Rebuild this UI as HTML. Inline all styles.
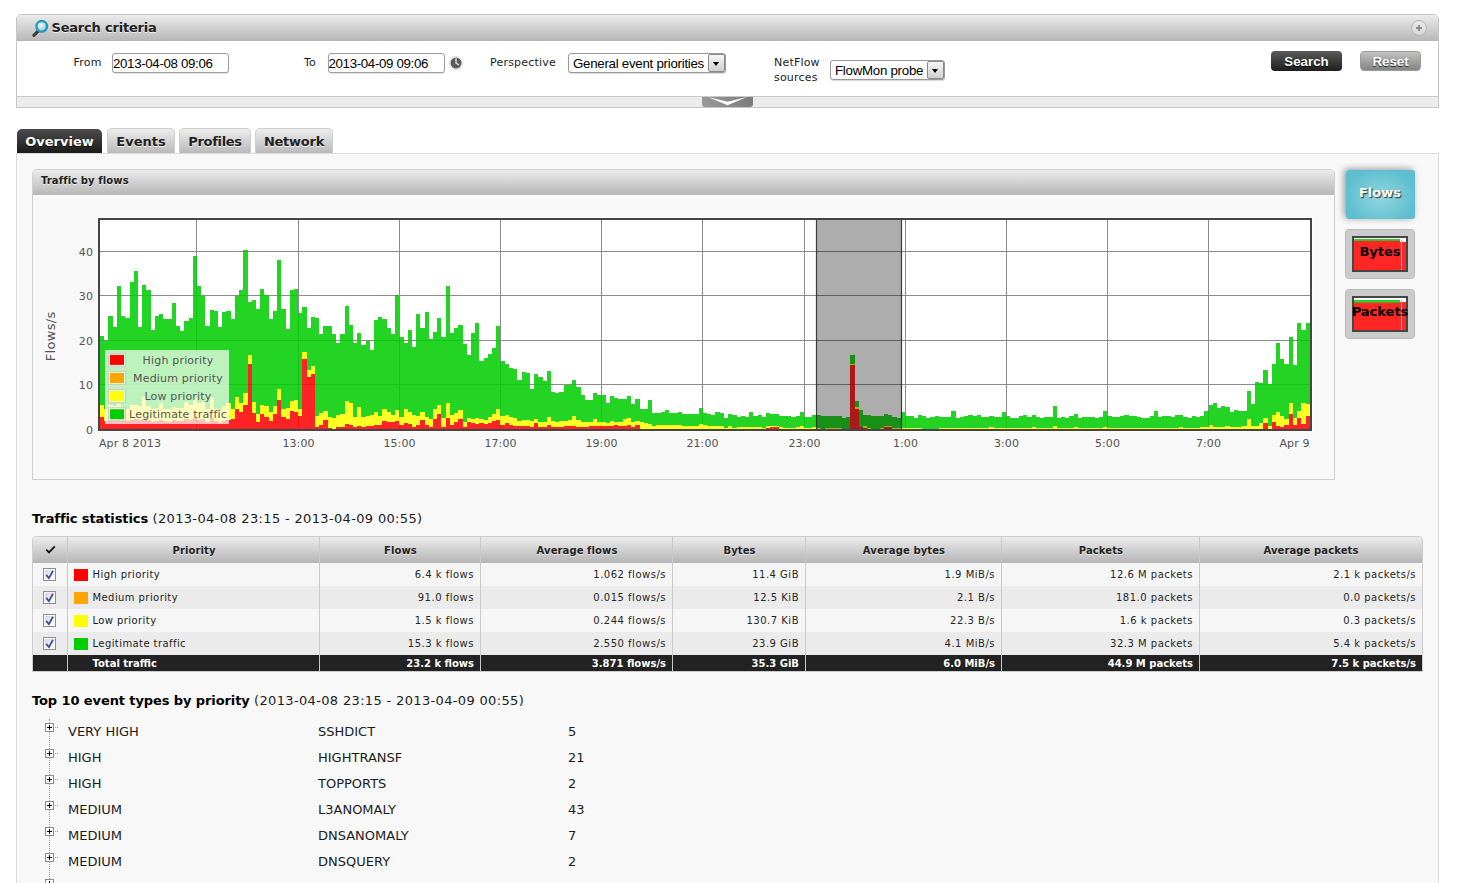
<!DOCTYPE html>
<html><head><meta charset="utf-8"><title>Overview</title>
<style>
*{box-sizing:border-box}
html,body{margin:0;padding:0}
body{width:1459px;height:883px;overflow:hidden;background:#fff;position:relative;font-family:"DejaVu Sans","Liberation Sans",sans-serif;font-size:11px;color:#1c1c1c}
.abs{position:absolute}
.ar{font-family:"Liberation Sans","DejaVu Sans",sans-serif}
/* search panel */
#sp{left:16px;top:14px;width:1423px;height:94px;border:1px solid #c6c6c6;border-radius:5px 5px 0 0;background:#fff}
#sph{left:0;top:0;width:1421px;height:26px;border-radius:4px 4px 0 0;background:linear-gradient(#ebebeb,#b7b7b7)}
#spt{left:34.5px;top:5px;letter-spacing:-.2px;font-weight:bold;font-size:13px;line-height:16px;color:#222;text-shadow:0 1px 0 rgba(255,255,255,.7)}
#spf{left:0;top:81px;width:1421px;height:11px;background:#ececec;border-top:1px solid #c8c8c8}
#tog{left:685.4px;top:82px;width:51px;height:10px;background:linear-gradient(90deg,#9a9a9a,#7c7c7c);border-radius:0 0 3px 3px}
.lbl{letter-spacing:.2px;font-size:11px;line-height:15px;color:#1c1c1c;white-space:nowrap}
.inp{height:20px;border:1px solid #9e9e9e;border-radius:3px;background:#fff;font-size:13.3px;letter-spacing:-.34px;line-height:18px;padding-left:0;padding-top:.5px;color:#000;white-space:nowrap;box-shadow:0 1px 1px rgba(0,0,0,.12)}
.sel{height:20px;border:1px solid #9a9a9a;border-radius:3px;background:#fff;font-size:13.3px;letter-spacing:-.27px;line-height:18px;padding-left:4px;padding-top:1px;color:#000;white-space:nowrap;box-shadow:0 1px 1px rgba(0,0,0,.15)}
.sel i{position:absolute;right:0;top:0;width:17px;height:18px;border:1px solid #8a8a8a;border-radius:2px;background:linear-gradient(#f6f6f6,#cfcfcf)}
.sel i:after{content:"";position:absolute;left:3.7px;top:7px;border:3.8px solid transparent;border-top:4px solid #000;border-bottom:0}
.btn{height:20px;border-radius:4px;font-weight:bold;font-size:13.3px;line-height:21px;text-align:center;color:#fff}
/* tabs */
.tab{top:128px;height:25px;border:1px solid #cfcfcf;border-bottom:0;border-radius:5px 5px 0 0;background:linear-gradient(#ededed,#b9b9b9);font-weight:bold;font-size:13px;line-height:26px;text-align:center;color:#222;text-shadow:0 1px 0 rgba(255,255,255,.8)}
#t1{top:129px;height:24px;border:0;background:linear-gradient(#4c4c4c,#1b1b1b);color:#fff;text-shadow:0 1px 1px #000;line-height:26px}
#panel{left:16px;top:153px;width:1423px;height:760px;border:1px solid #dcdcdc;background:#f8f8f8}
#tp{left:32px;top:169px;width:1303px;height:311px;border:1px solid #cfcfcf;border-radius:5px 5px 0 0;background:#f8f8f8}
#tph{left:0;top:0;width:1301px;height:25px;border-radius:4px 4px 0 0;background:linear-gradient(#ebebeb,#b7b7b7);font-weight:bold;font-size:10px;letter-spacing:.11px;line-height:22px;padding-left:8px;color:#222;text-shadow:0 1px 0 rgba(255,255,255,.6)}
svg.chart{position:absolute;left:32px;top:195px}
svg .tk{font-family:"DejaVu Sans","Liberation Sans",sans-serif;font-size:11px;fill:#545454;letter-spacing:.1px}
svg .yl{font-family:"DejaVu Sans","Liberation Sans",sans-serif;font-size:13px;fill:#545454;letter-spacing:.33px}
svg .lt{font-family:"DejaVu Sans","Liberation Sans",sans-serif;font-size:11px;fill:#545454;letter-spacing:.18px}
.sb{left:1345px;width:70px;height:50px;border-radius:4px;font-weight:bold;font-size:13px;text-align:center}
#b1{top:169.5px;left:1345.5px;width:69px;height:49px;border-radius:3px;background:radial-gradient(ellipse at 50% 55%,#93d5df,#5cbecf 75%);color:#fff;line-height:45px;text-shadow:1px 1px 1px rgba(0,0,0,.75);box-shadow:-2px -1px 7px rgba(0,0,0,.4)}
.sb2{background:#cbcbcb;border:1px solid #b9b9b9;color:#000}
.mini{position:absolute;left:6px;top:6px;width:56px;height:36px;border:2px solid #464646;background:#ff2626;overflow:hidden}
.mini b{position:absolute;left:0;top:0;width:52px;height:2px;background:#fff}
.mini u{position:absolute;left:0;top:1px;width:46px;height:2px;background:linear-gradient(#2bd22b 60%,#8c7a28)}
.mini s{position:absolute;left:47px;top:2px;width:1px;height:30px;background:#ffa060}
.mini em{position:absolute;left:46px;top:0;width:6px;height:4px;background:#fff}
.sbt{position:absolute;left:-10px;width:88px;top:13px;line-height:18px;font-style:normal}
h2{margin:0;font-size:13px;line-height:16px;font-weight:bold;color:#000;white-space:nowrap;letter-spacing:-.1px}
h2 span{font-weight:normal;color:#1c1c1c;letter-spacing:.34px}
/* table */
#tb{left:32px;top:536px;width:1391px;height:136px;border:1px solid #cdcdcd;border-radius:4px 4px 0 0;overflow:hidden}
#tbh{left:0;top:0;width:1389px;height:26px;background:linear-gradient(#ebebeb,#b5b5b5)}
.row{left:0;width:1389px;height:23px}
.th{top:0;height:26px;letter-spacing:.1px;line-height:28px;text-align:center;font-weight:bold;font-size:10px;color:#222;text-shadow:0 1px 0 rgba(255,255,255,.6)}
.td{top:0;height:23px;line-height:24px;text-align:right;padding-right:7px;white-space:nowrap;font-size:10px;letter-spacing:.5px;color:#262626}
.vl{top:0;width:1px;height:135px;background:#c9c9c9}
.cb{left:10px;top:5px;width:13px;height:13px;border:1px solid #8c8d8d;background:linear-gradient(135deg,#c6ccd8,#fff 75%);box-shadow:inset 0 0 0 1px #fff}
.cb svg{position:absolute;left:0;top:0}
.sw{left:41px;top:6px;width:14px;height:12px}
.nm{left:59.5px;top:0;line-height:24px;font-size:10px;letter-spacing:.42px;white-space:nowrap}
#tot{top:118px;height:17px;background:#222}
#tot .td,#tot .nm{color:#fff;font-weight:bold;height:16px;line-height:18px;letter-spacing:0}
/* tree */
.tr{font-family:"DejaVu Sans","Liberation Sans",sans-serif;font-size:13px;line-height:16px;color:#1c1c1c;white-space:nowrap}
.pm{width:9px;height:9px;border:1px solid #8c8c8c;background:#fff}
.pm:before{content:"";position:absolute;left:1px;top:3px;width:5px;height:1px;background:#000}
.pm:after{content:"";position:absolute;left:3px;top:1px;width:1px;height:5px;background:#000}
</style></head><body>

<div id="sp" class="abs">
  <div id="sph" class="abs"></div>
  <svg class="abs" style="left:14px;top:3px" width="20" height="20" viewBox="0 0 20 20"><defs><radialGradient id="lens" cx="40%" cy="35%" r="70%"><stop offset="0" stop-color="#eef6f8"/><stop offset="1" stop-color="#9fc4cf"/></radialGradient></defs><line x1="2.9" y1="17.3" x2="7" y2="13.2" stroke="#3a3a3a" stroke-width="3.1" stroke-linecap="round"/><circle cx="10.7" cy="8.3" r="5.3" fill="url(#lens)" stroke="#1b9cbf" stroke-width="2.4"/></svg>
  <div id="spt" class="abs">Search criteria</div>
  <div class="abs" style="left:1394px;top:5px;width:16px;height:16px;border-radius:8px;border:1px solid #b4b4b4;background:rgba(255,255,255,.35)"></div>
  <div class="abs" style="left:1399px;top:12px;width:6px;height:2px;background:#8c8c8c"></div><div class="abs" style="left:1401px;top:10px;width:2px;height:6px;background:#8c8c8c"></div>

  <div class="abs lbl" style="left:56.4px;top:40px;letter-spacing:.3px">From</div>
  <div class="abs inp ar" style="left:95px;top:38px;width:117px">2013-04-08 09:06</div>
  <div class="abs lbl" style="left:287px;top:40px">To</div>
  <div class="abs inp ar" style="left:310.5px;top:38px;width:117px">2013-04-09 09:06</div>
  <svg class="abs" style="left:432px;top:41px" width="14" height="14" viewBox="0 0 14 14"><circle cx="7" cy="7" r="6.5" fill="none" stroke="#dcdcdc" stroke-width="1"/><circle cx="7" cy="7" r="5.5" fill="#5b5b5b"/><path d="M7 2.2V7.2L10 8.8" stroke="#e0e0e0" stroke-width="1.4" fill="none"/></svg>
  <div class="abs lbl" style="left:473px;top:40px">Perspective</div>
  <div class="abs sel ar" style="left:551px;top:38px;width:158px">General event priorities<i></i></div>
  <div class="abs lbl" style="left:757px;top:40px">NetFlow<br>sources</div>
  <div class="abs sel ar" style="left:813px;top:45px;width:115px">FlowMon probe<i></i></div>
  <div class="abs btn ar" style="left:1254px;top:36px;width:71px;background:linear-gradient(#5a5a5a,#1e1e1e);text-shadow:0 1px 1px #000">Search</div>
  <div class="abs btn ar" style="left:1343px;top:36px;width:61px;background:linear-gradient(#c2c2c2,#848484);border:1px solid #9c9c9c;line-height:19px;text-shadow:0 1px 1px rgba(0,0,0,.8)">Reset</div>

  <div id="spf" class="abs"></div>
  <div id="tog" class="abs"><svg width="51" height="10" viewBox="0 0 51 10" style="position:absolute;left:0;top:0"><path d="M6 0L25.5 8.2L45 0L25.5 4.8Z" fill="#fff"/></svg></div>
</div>

<div id="panel" class="abs"></div>
<div id="t1" class="abs tab" style="left:17px;width:85px">Overview</div>
<div class="abs tab" style="left:107px;width:68px">Events</div>
<div class="abs tab" style="left:179px;width:72px;letter-spacing:-.3px">Profiles</div>
<div class="abs tab" style="left:255px;width:78px;letter-spacing:-.25px">Network</div>

<div id="tp" class="abs"><div id="tph" class="abs">Traffic by flows</div></div>
<svg class="chart" width="1302" height="284" viewBox="32 195 1302 284">
<rect x="97" y="217" width="1216" height="215" fill="#fff"/>
<line x1="196.5" y1="220" x2="196.5" y2="429" stroke="#8c8c8c" stroke-width="1"/>
<line x1="298.5" y1="220" x2="298.5" y2="429" stroke="#8c8c8c" stroke-width="1"/>
<line x1="399.5" y1="220" x2="399.5" y2="429" stroke="#8c8c8c" stroke-width="1"/>
<line x1="500.5" y1="220" x2="500.5" y2="429" stroke="#8c8c8c" stroke-width="1"/>
<line x1="601.5" y1="220" x2="601.5" y2="429" stroke="#8c8c8c" stroke-width="1"/>
<line x1="702.5" y1="220" x2="702.5" y2="429" stroke="#8c8c8c" stroke-width="1"/>
<line x1="804.5" y1="220" x2="804.5" y2="429" stroke="#8c8c8c" stroke-width="1"/>
<line x1="905.5" y1="220" x2="905.5" y2="429" stroke="#8c8c8c" stroke-width="1"/>
<line x1="1006.5" y1="220" x2="1006.5" y2="429" stroke="#8c8c8c" stroke-width="1"/>
<line x1="1107.5" y1="220" x2="1107.5" y2="429" stroke="#8c8c8c" stroke-width="1"/>
<line x1="1208.5" y1="220" x2="1208.5" y2="429" stroke="#8c8c8c" stroke-width="1"/>
<line x1="100" y1="251.5" x2="1310" y2="251.5" stroke="#8c8c8c" stroke-width="1"/>
<line x1="100" y1="295.5" x2="1310" y2="295.5" stroke="#8c8c8c" stroke-width="1"/>
<line x1="100" y1="340.5" x2="1310" y2="340.5" stroke="#8c8c8c" stroke-width="1"/>
<line x1="100" y1="384.5" x2="1310" y2="384.5" stroke="#8c8c8c" stroke-width="1"/>
<g shape-rendering="crispEdges" fill-opacity="0.86">
<path d="M100.0 335.8 L104.2 335.8 L104.2 340.6 L108.4 340.6 L108.4 315.8 L112.6 315.8 L112.6 327.3 L116.9 327.3 L116.9 285.5 L121.1 285.5 L121.1 315.8 L125.3 315.8 L125.3 317.8 L129.5 317.8 L129.5 281.5 L133.7 281.5 L133.7 270.9 L137.9 270.9 L137.9 327.1 L142.2 327.1 L142.2 285.1 L146.4 285.1 L146.4 289.7 L150.6 289.7 L150.6 329.5 L154.8 329.5 L154.8 316.4 L159.0 316.4 L159.0 314.3 L163.2 314.3 L163.2 319.1 L167.4 319.1 L167.4 318.8 L171.7 318.8 L171.7 302.6 L175.9 302.6 L175.9 326.1 L180.1 326.1 L180.1 331.2 L184.3 331.2 L184.3 320.6 L188.5 320.6 L188.5 317.6 L192.7 317.6 L192.7 256.4 L196.9 256.4 L196.9 285.8 L201.2 285.8 L201.2 295.8 L205.4 295.8 L205.4 325.5 L209.6 325.5 L209.6 309.6 L213.8 309.6 L213.8 310.6 L218.0 310.6 L218.0 326.5 L222.2 326.5 L222.2 311.8 L226.4 311.8 L226.4 310.6 L230.7 310.6 L230.7 318.6 L234.9 318.6 L234.9 295.5 L239.1 295.5 L239.1 289.9 L243.3 289.9 L243.3 250.3 L247.5 250.3 L247.5 302.4 L251.7 302.4 L251.7 300.4 L256.0 300.4 L256.0 308.6 L260.2 308.6 L260.2 288.9 L264.4 288.9 L264.4 295.4 L268.6 295.4 L268.6 319.1 L272.8 319.1 L272.8 310.9 L277.0 310.9 L277.0 260.4 L281.2 260.4 L281.2 308.7 L285.5 308.7 L285.5 328.5 L289.7 328.5 L289.7 290.3 L293.9 290.3 L293.9 289.1 L298.1 289.1 L298.1 312.5 L302.3 312.5 L302.3 307.3 L306.5 307.3 L306.5 327.5 L310.8 327.5 L310.8 316.6 L315.0 316.6 L315.0 318.2 L319.2 318.2 L319.2 333.6 L323.4 333.6 L323.4 326.1 L327.6 326.1 L327.6 325.8 L331.8 325.8 L331.8 334.0 L336.0 334.0 L336.0 342.5 L340.3 342.5 L340.3 333.6 L344.5 333.6 L344.5 306.3 L348.7 306.3 L348.7 324.5 L352.9 324.5 L352.9 342.5 L357.1 342.5 L357.1 333.1 L361.3 333.1 L361.3 344.5 L365.5 344.5 L365.5 340.9 L369.8 340.9 L369.8 349.6 L374.0 349.6 L374.0 320.0 L378.2 320.0 L378.2 316.7 L382.4 316.7 L382.4 319.1 L386.6 319.1 L386.6 327.7 L390.8 327.7 L390.8 334.0 L395.1 334.0 L395.1 294.9 L399.3 294.9 L399.3 336.8 L403.5 336.8 L403.5 343.4 L407.7 343.4 L407.7 329.7 L411.9 329.7 L411.9 346.6 L416.1 346.6 L416.1 314.4 L420.3 314.4 L420.3 327.9 L424.6 327.9 L424.6 312.1 L428.8 312.1 L428.8 339.2 L433.0 339.2 L433.0 332.4 L437.2 332.4 L437.2 318.2 L441.4 318.2 L441.4 336.6 L445.6 336.6 L445.6 285.5 L449.8 285.5 L449.8 332.8 L454.1 332.8 L454.1 327.9 L458.3 327.9 L458.3 324.6 L462.5 324.6 L462.5 344.4 L466.7 344.4 L466.7 354.7 L470.9 354.7 L470.9 333.4 L475.1 333.4 L475.1 322.7 L479.3 322.7 L479.3 360.5 L483.6 360.5 L483.6 358.3 L487.8 358.3 L487.8 353.8 L492.0 353.8 L492.0 347.5 L496.2 347.5 L496.2 326.3 L500.4 326.3 L500.4 361.1 L504.6 361.1 L504.6 364.4 L508.9 364.4 L508.9 367.7 L513.1 367.7 L513.1 369.3 L517.3 369.3 L517.3 380.0 L521.5 380.0 L521.5 371.6 L525.7 371.6 L525.7 373.4 L529.9 373.4 L529.9 388.8 L534.1 388.8 L534.1 374.3 L538.4 374.3 L538.4 377.4 L542.6 377.4 L542.6 381.3 L546.8 381.3 L546.8 370.7 L551.0 370.7 L551.0 392.2 L555.2 392.2 L555.2 393.1 L559.4 393.1 L559.4 391.5 L563.6 391.5 L563.6 384.9 L567.9 384.9 L567.9 384.6 L572.1 384.6 L572.1 379.5 L576.3 379.5 L576.3 387.0 L580.5 387.0 L580.5 394.9 L584.7 394.9 L584.7 400.3 L588.9 400.3 L588.9 399.9 L593.2 399.9 L593.2 393.4 L597.4 393.4 L597.4 395.1 L601.6 395.1 L601.6 394.5 L605.8 394.5 L605.8 402.5 L610.0 402.5 L610.0 396.3 L614.2 396.3 L614.2 397.7 L618.4 397.7 L618.4 398.7 L622.7 398.7 L622.7 398.5 L626.9 398.5 L626.9 395.7 L631.1 395.7 L631.1 404.3 L635.3 404.3 L635.3 399.1 L639.5 399.1 L639.5 408.5 L643.7 408.5 L643.7 409.4 L647.9 409.4 L647.9 399.7 L652.2 399.7 L652.2 413.0 L656.4 413.0 L656.4 412.8 L660.6 412.8 L660.6 412.1 L664.8 412.1 L664.8 410.0 L669.0 410.0 L669.0 412.8 L673.2 412.8 L673.2 412.5 L677.5 412.5 L677.5 412.3 L681.7 412.3 L681.7 414.2 L685.9 414.2 L685.9 414.0 L690.1 414.0 L690.1 414.0 L694.3 414.0 L694.3 414.4 L698.5 414.4 L698.5 408.2 L702.7 408.2 L702.7 413.0 L707.0 413.0 L707.0 414.4 L711.2 414.4 L711.2 415.2 L715.4 415.2 L715.4 412.0 L719.6 412.0 L719.6 413.2 L723.8 413.2 L723.8 417.5 L728.0 417.5 L728.0 413.8 L732.2 413.8 L732.2 415.4 L736.5 415.4 L736.5 417.2 L740.7 417.2 L740.7 415.7 L744.9 415.7 L744.9 417.0 L749.1 417.0 L749.1 411.8 L753.3 411.8 L753.3 416.4 L757.5 416.4 L757.5 415.4 L761.8 415.4 L761.8 417.2 L766.0 417.2 L766.0 413.4 L770.2 413.4 L770.2 414.0 L774.4 414.0 L774.4 413.5 L778.6 413.5 L778.6 415.7 L782.8 415.7 L782.8 416.3 L787.0 416.3 L787.0 416.3 L791.3 416.3 L791.3 417.2 L795.5 417.2 L795.5 416.4 L799.7 416.4 L799.7 411.5 L803.9 411.5 L803.9 416.6 L808.1 416.6 L808.1 416.9 L812.3 416.9 L812.3 415.4 L816.5 415.4 L816.5 415.4 L820.8 415.4 L820.8 416.4 L825.0 416.4 L825.0 416.0 L829.2 416.0 L829.2 415.8 L833.4 415.8 L833.4 416.4 L837.6 416.4 L837.6 416.3 L841.8 416.3 L841.8 417.5 L846.1 417.5 L846.1 417.0 L850.3 417.0 L850.3 355.3 L854.5 355.3 L854.5 401.2 L858.7 401.2 L858.7 409.6 L862.9 409.6 L862.9 415.2 L867.1 415.2 L867.1 414.6 L871.3 414.6 L871.3 416.4 L875.6 416.4 L875.6 416.0 L879.8 416.0 L879.8 416.0 L884.0 416.0 L884.0 414.2 L888.2 414.2 L888.2 414.8 L892.4 414.8 L892.4 416.9 L896.6 416.9 L896.6 417.8 L900.9 417.8 L900.9 412.4 L905.1 412.4 L905.1 416.4 L909.3 416.4 L909.3 416.4 L913.5 416.4 L913.5 417.5 L917.7 417.5 L917.7 415.2 L921.9 415.2 L921.9 416.0 L926.1 416.0 L926.1 417.5 L930.4 417.5 L930.4 416.6 L934.6 416.6 L934.6 416.4 L938.8 416.4 L938.8 416.6 L943.0 416.6 L943.0 416.6 L947.2 416.6 L947.2 416.9 L951.4 416.9 L951.4 411.4 L955.6 411.4 L955.6 417.6 L959.9 417.6 L959.9 416.6 L964.1 416.6 L964.1 416.3 L968.3 416.3 L968.3 415.4 L972.5 415.4 L972.5 416.4 L976.7 416.4 L976.7 415.2 L980.9 415.2 L980.9 416.9 L985.1 416.9 L985.1 417.2 L989.4 417.2 L989.4 416.4 L993.6 416.4 L993.6 417.2 L997.8 417.2 L997.8 417.2 L1002.0 417.2 L1002.0 412.4 L1006.2 412.4 L1006.2 416.0 L1010.4 416.0 L1010.4 418.4 L1014.7 418.4 L1014.7 417.5 L1018.9 417.5 L1018.9 415.7 L1023.1 415.7 L1023.1 415.4 L1027.3 415.4 L1027.3 417.2 L1031.5 417.2 L1031.5 415.4 L1035.7 415.4 L1035.7 416.9 L1039.9 416.9 L1039.9 417.8 L1044.2 417.8 L1044.2 416.6 L1048.4 416.6 L1048.4 416.9 L1052.6 416.9 L1052.6 406.4 L1056.8 406.4 L1056.8 417.8 L1061.0 417.8 L1061.0 417.0 L1065.2 417.0 L1065.2 417.5 L1069.4 417.5 L1069.4 416.0 L1073.7 416.0 L1073.7 413.6 L1077.9 413.6 L1077.9 417.5 L1082.1 417.5 L1082.1 417.2 L1086.3 417.2 L1086.3 416.6 L1090.5 416.6 L1090.5 417.2 L1094.7 417.2 L1094.7 418.1 L1099.0 418.1 L1099.0 417.2 L1103.2 417.2 L1103.2 410.8 L1107.4 410.8 L1107.4 416.3 L1111.6 416.3 L1111.6 417.2 L1115.8 417.2 L1115.8 417.2 L1120.0 417.2 L1120.0 416.3 L1124.2 416.3 L1124.2 414.8 L1128.5 414.8 L1128.5 416.0 L1132.7 416.0 L1132.7 416.3 L1136.9 416.3 L1136.9 417.2 L1141.1 417.2 L1141.1 417.8 L1145.3 417.8 L1145.3 418.4 L1149.5 418.4 L1149.5 416.3 L1153.8 416.3 L1153.8 411.4 L1158.0 411.4 L1158.0 416.6 L1162.2 416.6 L1162.2 416.0 L1166.4 416.0 L1166.4 416.3 L1170.6 416.3 L1170.6 417.2 L1174.8 417.2 L1174.8 414.8 L1179.0 414.8 L1179.0 415.4 L1183.3 415.4 L1183.3 416.6 L1187.5 416.6 L1187.5 417.8 L1191.7 417.8 L1191.7 416.0 L1195.9 416.0 L1195.9 417.2 L1200.1 417.2 L1200.1 416.0 L1204.3 416.0 L1204.3 410.6 L1208.5 410.6 L1208.5 405.4 L1212.8 405.4 L1212.8 403.1 L1217.0 403.1 L1217.0 408.4 L1221.2 408.4 L1221.2 406.4 L1225.4 406.4 L1225.4 407.2 L1229.6 407.2 L1229.6 412.4 L1233.8 412.4 L1233.8 410.2 L1238.0 410.2 L1238.0 411.4 L1242.3 411.4 L1242.3 410.6 L1246.5 410.6 L1246.5 390.9 L1250.7 390.9 L1250.7 404.3 L1254.9 404.3 L1254.9 382.4 L1259.1 382.4 L1259.1 382.8 L1263.3 382.8 L1263.3 370.4 L1267.6 370.4 L1267.6 383.8 L1271.8 383.8 L1271.8 364.3 L1276.0 364.3 L1276.0 342.6 L1280.2 342.6 L1280.2 359.2 L1284.4 359.2 L1284.4 364.3 L1288.6 364.3 L1288.6 337.3 L1292.8 337.3 L1292.8 365.0 L1297.1 365.0 L1297.1 322.6 L1301.3 322.6 L1301.3 330.3 L1305.5 330.3 L1305.5 322.6 L1310.0 322.6 L1310.0 404.3 L1305.5 404.3 L1305.5 403.3 L1301.3 403.3 L1301.3 410.9 L1297.1 410.9 L1297.1 417.8 L1292.8 417.8 L1292.8 403.3 L1288.6 403.3 L1288.6 419.0 L1284.4 419.0 L1284.4 416.3 L1280.2 416.3 L1280.2 411.8 L1276.0 411.8 L1276.0 414.6 L1271.8 414.6 L1271.8 426.0 L1267.6 426.0 L1267.6 417.5 L1263.3 417.5 L1263.3 423.3 L1259.1 423.3 L1259.1 426.0 L1254.9 426.0 L1254.9 426.0 L1250.7 426.0 L1250.7 419.4 L1246.5 419.4 L1246.5 426.3 L1242.3 426.3 L1242.3 426.5 L1238.0 426.5 L1238.0 426.5 L1233.8 426.5 L1233.8 427.2 L1229.6 427.2 L1229.6 426.3 L1225.4 426.3 L1225.4 426.9 L1221.2 426.9 L1221.2 427.2 L1217.0 427.2 L1217.0 426.9 L1212.8 426.9 L1212.8 425.3 L1208.5 425.3 L1208.5 426.6 L1204.3 426.6 L1204.3 427.2 L1200.1 427.2 L1200.1 427.9 L1195.9 427.9 L1195.9 427.5 L1191.7 427.5 L1191.7 428.1 L1187.5 428.1 L1187.5 428.1 L1183.3 428.1 L1183.3 426.9 L1179.0 426.9 L1179.0 427.5 L1174.8 427.5 L1174.8 428.1 L1170.6 428.1 L1170.6 428.1 L1166.4 428.1 L1166.4 428.1 L1162.2 428.1 L1162.2 427.9 L1158.0 427.9 L1158.0 427.5 L1153.8 427.5 L1153.8 427.9 L1149.5 427.9 L1149.5 428.1 L1145.3 428.1 L1145.3 428.1 L1141.1 428.1 L1141.1 428.0 L1136.9 428.0 L1136.9 428.0 L1132.7 428.0 L1132.7 428.0 L1128.5 428.0 L1128.5 428.0 L1124.2 428.0 L1124.2 428.0 L1120.0 428.0 L1120.0 428.0 L1115.8 428.0 L1115.8 428.0 L1111.6 428.0 L1111.6 428.0 L1107.4 428.0 L1107.4 427.0 L1103.2 427.0 L1103.2 428.0 L1099.0 428.0 L1099.0 428.0 L1094.7 428.0 L1094.7 428.0 L1090.5 428.0 L1090.5 428.0 L1086.3 428.0 L1086.3 428.0 L1082.1 428.0 L1082.1 428.0 L1077.9 428.0 L1077.9 427.0 L1073.7 427.0 L1073.7 428.0 L1069.4 428.0 L1069.4 428.0 L1065.2 428.0 L1065.2 428.0 L1061.0 428.0 L1061.0 428.0 L1056.8 428.0 L1056.8 426.3 L1052.6 426.3 L1052.6 428.0 L1048.4 428.0 L1048.4 428.0 L1044.2 428.0 L1044.2 428.0 L1039.9 428.0 L1039.9 428.0 L1035.7 428.0 L1035.7 427.2 L1031.5 427.2 L1031.5 428.0 L1027.3 428.0 L1027.3 428.0 L1023.1 428.0 L1023.1 428.0 L1018.9 428.0 L1018.9 428.0 L1014.7 428.0 L1014.7 428.0 L1010.4 428.0 L1010.4 428.0 L1006.2 428.0 L1006.2 428.0 L1002.0 428.0 L1002.0 428.0 L997.8 428.0 L997.8 428.0 L993.6 428.0 L993.6 427.2 L989.4 427.2 L989.4 428.0 L985.1 428.0 L985.1 428.0 L980.9 428.0 L980.9 428.1 L976.7 428.1 L976.7 428.1 L972.5 428.1 L972.5 428.2 L968.3 428.2 L968.3 428.2 L964.1 428.2 L964.1 428.2 L959.9 428.2 L959.9 428.2 L955.6 428.2 L955.6 428.1 L951.4 428.1 L951.4 428.3 L947.2 428.3 L947.2 428.3 L943.0 428.3 L943.0 428.3 L938.8 428.3 L938.8 428.5 L934.6 428.5 L934.6 428.5 L930.4 428.5 L930.4 428.5 L926.1 428.5 L926.1 428.5 L921.9 428.5 L921.9 428.2 L917.7 428.2 L917.7 428.2 L913.5 428.2 L913.5 428.2 L909.3 428.2 L909.3 428.1 L905.1 428.1 L905.1 427.9 L900.9 427.9 L900.9 427.9 L896.6 427.9 L896.6 428.1 L892.4 428.1 L892.4 426.3 L888.2 426.3 L888.2 425.7 L884.0 425.7 L884.0 428.1 L879.8 428.1 L879.8 428.5 L875.6 428.5 L875.6 428.5 L871.3 428.5 L871.3 427.9 L867.1 427.9 L867.1 426.3 L862.9 426.3 L862.9 426.6 L858.7 426.6 L858.7 407.2 L854.5 407.2 L854.5 364.4 L850.3 364.4 L850.3 428.5 L846.1 428.5 L846.1 428.5 L841.8 428.5 L841.8 428.3 L837.6 428.3 L837.6 428.2 L833.4 428.2 L833.4 428.1 L829.2 428.1 L829.2 428.1 L825.0 428.1 L825.0 428.5 L820.8 428.5 L820.8 428.1 L816.5 428.1 L816.5 426.6 L812.3 426.6 L812.3 427.5 L808.1 427.5 L808.1 427.7 L803.9 427.7 L803.9 426.3 L799.7 426.3 L799.7 427.2 L795.5 427.2 L795.5 427.5 L791.3 427.5 L791.3 427.5 L787.0 427.5 L787.0 427.7 L782.8 427.7 L782.8 427.2 L778.6 427.2 L778.6 425.7 L774.4 425.7 L774.4 425.7 L770.2 425.7 L770.2 426.3 L766.0 426.3 L766.0 428.1 L761.8 428.1 L761.8 426.9 L757.5 426.9 L757.5 426.6 L753.3 426.6 L753.3 426.5 L749.1 426.5 L749.1 427.2 L744.9 427.2 L744.9 426.9 L740.7 426.9 L740.7 427.2 L736.5 427.2 L736.5 427.5 L732.2 427.5 L732.2 425.7 L728.0 425.7 L728.0 428.1 L723.8 428.1 L723.8 426.3 L719.6 426.3 L719.6 426.2 L715.4 426.2 L715.4 425.9 L711.2 425.9 L711.2 425.7 L707.0 425.7 L707.0 425.4 L702.7 425.4 L702.7 424.1 L698.5 424.1 L698.5 425.8 L694.3 425.8 L694.3 426.0 L690.1 426.0 L690.1 425.7 L685.9 425.7 L685.9 425.8 L681.7 425.8 L681.7 424.8 L677.5 424.8 L677.5 425.4 L673.2 425.4 L673.2 425.3 L669.0 425.3 L669.0 425.1 L664.8 425.1 L664.8 425.3 L660.6 425.3 L660.6 425.4 L656.4 425.4 L656.4 425.7 L652.2 425.7 L652.2 423.6 L647.9 423.6 L647.9 423.0 L643.7 423.0 L643.7 422.3 L639.5 422.3 L639.5 420.8 L635.3 420.8 L635.3 422.1 L631.1 422.1 L631.1 418.4 L626.9 418.4 L626.9 419.4 L622.7 419.4 L622.7 422.4 L618.4 422.4 L618.4 422.1 L614.2 422.1 L614.2 421.2 L610.0 421.2 L610.0 422.7 L605.8 422.7 L605.8 422.3 L601.6 422.3 L601.6 421.8 L597.4 421.8 L597.4 419.0 L593.2 419.0 L593.2 422.1 L588.9 422.1 L588.9 422.1 L584.7 422.1 L584.7 422.3 L580.5 422.3 L580.5 420.2 L576.3 420.2 L576.3 416.0 L572.1 416.0 L572.1 420.2 L567.9 420.2 L567.9 420.8 L563.6 420.8 L563.6 420.8 L559.4 420.8 L559.4 422.1 L555.2 422.1 L555.2 420.8 L551.0 420.8 L551.0 416.6 L546.8 416.6 L546.8 421.8 L542.6 421.8 L542.6 422.1 L538.4 422.1 L538.4 419.0 L534.1 419.0 L534.1 420.8 L529.9 420.8 L529.9 420.2 L525.7 420.2 L525.7 420.2 L521.5 420.2 L521.5 420.8 L517.3 420.8 L517.3 418.4 L513.1 418.4 L513.1 416.6 L508.9 416.6 L508.9 415.4 L504.6 415.4 L504.6 416.4 L500.4 416.4 L500.4 409.1 L496.2 409.1 L496.2 414.2 L492.0 414.2 L492.0 417.2 L487.8 417.2 L487.8 419.6 L483.6 419.6 L483.6 418.8 L479.3 418.8 L479.3 418.1 L475.1 418.1 L475.1 418.8 L470.9 418.8 L470.9 417.5 L466.7 417.5 L466.7 422.1 L462.5 422.1 L462.5 410.3 L458.3 410.3 L458.3 412.8 L454.1 412.8 L454.1 415.4 L449.8 415.4 L449.8 402.5 L445.6 402.5 L445.6 417.5 L441.4 417.5 L441.4 404.5 L437.2 404.5 L437.2 408.8 L433.0 408.8 L433.0 418.8 L428.8 418.8 L428.8 416.6 L424.6 416.6 L424.6 412.4 L420.3 412.4 L420.3 416.4 L416.1 416.4 L416.1 415.4 L411.9 415.4 L411.9 412.4 L407.7 412.4 L407.7 409.4 L403.5 409.4 L403.5 416.6 L399.3 416.6 L399.3 409.6 L395.1 409.6 L395.1 415.0 L390.8 415.0 L390.8 412.4 L386.6 412.4 L386.6 409.4 L382.4 409.4 L382.4 415.7 L378.2 415.7 L378.2 411.8 L374.0 411.8 L374.0 414.8 L369.8 414.8 L369.8 416.0 L365.5 416.0 L365.5 417.2 L361.3 417.2 L361.3 406.7 L357.1 406.7 L357.1 416.6 L352.9 416.6 L352.9 403.3 L348.7 403.3 L348.7 401.2 L344.5 401.2 L344.5 413.6 L340.3 413.6 L340.3 414.8 L336.0 414.8 L336.0 417.8 L331.8 417.8 L331.8 417.2 L327.6 417.2 L327.6 410.6 L323.4 410.6 L323.4 413.0 L319.2 413.0 L319.2 416.0 L315.0 416.0 L315.0 366.2 L310.8 366.2 L310.8 370.1 L306.5 370.1 L306.5 352.0 L302.3 352.0 L302.3 408.5 L298.1 408.5 L298.1 399.5 L293.9 399.5 L293.9 401.2 L289.7 401.2 L289.7 408.2 L285.5 408.2 L285.5 408.8 L281.2 408.8 L281.2 389.4 L277.0 389.4 L277.0 405.7 L272.8 405.7 L272.8 412.4 L268.6 412.4 L268.6 405.7 L264.4 405.7 L264.4 405.1 L260.2 405.1 L260.2 413.6 L256.0 413.6 L256.0 402.4 L251.7 402.4 L251.7 355.0 L247.5 355.0 L247.5 393.1 L243.3 393.1 L243.3 402.7 L239.1 402.7 L239.1 396.7 L234.9 396.7 L234.9 409.4 L230.7 409.4 L230.7 403.3 L226.4 403.3 L226.4 406.4 L222.2 406.4 L222.2 411.2 L218.0 411.2 L218.0 409.4 L213.8 409.4 L213.8 397.3 L209.6 397.3 L209.6 409.4 L205.4 409.4 L205.4 401.5 L201.2 401.5 L201.2 403.3 L196.9 403.3 L196.9 397.9 L192.7 397.9 L192.7 405.1 L188.5 405.1 L188.5 402.4 L184.3 402.4 L184.3 408.2 L180.1 408.2 L180.1 408.2 L175.9 408.2 L175.9 407.0 L171.7 407.0 L171.7 409.4 L167.4 409.4 L167.4 409.4 L163.2 409.4 L163.2 403.3 L159.0 403.3 L159.0 408.2 L154.8 408.2 L154.8 409.4 L150.6 409.4 L150.6 405.7 L146.4 405.7 L146.4 396.7 L142.2 396.7 L142.2 406.4 L137.9 406.4 L137.9 405.1 L133.7 405.1 L133.7 404.5 L129.5 404.5 L129.5 408.8 L125.3 408.8 L125.3 407.0 L121.1 407.0 L121.1 403.9 L116.9 403.9 L116.9 406.4 L112.6 406.4 L112.6 404.5 L108.4 404.5 L108.4 409.4 L104.2 409.4 L104.2 404.5 L100.0 404.5Z" fill="#00cd00"/>
<path d="M100.0 404.5 L104.2 404.5 L104.2 409.4 L108.4 409.4 L108.4 404.5 L112.6 404.5 L112.6 406.4 L116.9 406.4 L116.9 403.9 L121.1 403.9 L121.1 407.0 L125.3 407.0 L125.3 408.8 L129.5 408.8 L129.5 404.5 L133.7 404.5 L133.7 405.1 L137.9 405.1 L137.9 406.4 L142.2 406.4 L142.2 396.7 L146.4 396.7 L146.4 405.7 L150.6 405.7 L150.6 409.4 L154.8 409.4 L154.8 408.2 L159.0 408.2 L159.0 403.3 L163.2 403.3 L163.2 409.4 L167.4 409.4 L167.4 409.4 L171.7 409.4 L171.7 407.0 L175.9 407.0 L175.9 408.2 L180.1 408.2 L180.1 408.2 L184.3 408.2 L184.3 402.4 L188.5 402.4 L188.5 405.1 L192.7 405.1 L192.7 397.9 L196.9 397.9 L196.9 403.3 L201.2 403.3 L201.2 401.5 L205.4 401.5 L205.4 409.4 L209.6 409.4 L209.6 397.3 L213.8 397.3 L213.8 409.4 L218.0 409.4 L218.0 411.2 L222.2 411.2 L222.2 406.4 L226.4 406.4 L226.4 403.3 L230.7 403.3 L230.7 409.4 L234.9 409.4 L234.9 396.7 L239.1 396.7 L239.1 402.7 L243.3 402.7 L243.3 393.1 L247.5 393.1 L247.5 355.0 L251.7 355.0 L251.7 402.4 L256.0 402.4 L256.0 413.6 L260.2 413.6 L260.2 405.1 L264.4 405.1 L264.4 405.7 L268.6 405.7 L268.6 412.4 L272.8 412.4 L272.8 405.7 L277.0 405.7 L277.0 389.4 L281.2 389.4 L281.2 408.8 L285.5 408.8 L285.5 408.2 L289.7 408.2 L289.7 401.2 L293.9 401.2 L293.9 399.5 L298.1 399.5 L298.1 408.5 L302.3 408.5 L302.3 352.0 L306.5 352.0 L306.5 370.1 L310.8 370.1 L310.8 366.2 L315.0 366.2 L315.0 416.0 L319.2 416.0 L319.2 413.0 L323.4 413.0 L323.4 410.6 L327.6 410.6 L327.6 417.2 L331.8 417.2 L331.8 417.8 L336.0 417.8 L336.0 414.8 L340.3 414.8 L340.3 413.6 L344.5 413.6 L344.5 401.2 L348.7 401.2 L348.7 403.3 L352.9 403.3 L352.9 416.6 L357.1 416.6 L357.1 406.7 L361.3 406.7 L361.3 417.2 L365.5 417.2 L365.5 416.0 L369.8 416.0 L369.8 414.8 L374.0 414.8 L374.0 411.8 L378.2 411.8 L378.2 415.7 L382.4 415.7 L382.4 409.4 L386.6 409.4 L386.6 412.4 L390.8 412.4 L390.8 415.0 L395.1 415.0 L395.1 409.6 L399.3 409.6 L399.3 416.6 L403.5 416.6 L403.5 409.4 L407.7 409.4 L407.7 412.4 L411.9 412.4 L411.9 415.4 L416.1 415.4 L416.1 416.4 L420.3 416.4 L420.3 412.4 L424.6 412.4 L424.6 416.6 L428.8 416.6 L428.8 418.8 L433.0 418.8 L433.0 408.8 L437.2 408.8 L437.2 404.5 L441.4 404.5 L441.4 417.5 L445.6 417.5 L445.6 402.5 L449.8 402.5 L449.8 415.4 L454.1 415.4 L454.1 412.8 L458.3 412.8 L458.3 410.3 L462.5 410.3 L462.5 422.1 L466.7 422.1 L466.7 417.5 L470.9 417.5 L470.9 418.8 L475.1 418.8 L475.1 418.1 L479.3 418.1 L479.3 418.8 L483.6 418.8 L483.6 419.6 L487.8 419.6 L487.8 417.2 L492.0 417.2 L492.0 414.2 L496.2 414.2 L496.2 409.1 L500.4 409.1 L500.4 416.4 L504.6 416.4 L504.6 415.4 L508.9 415.4 L508.9 416.6 L513.1 416.6 L513.1 418.4 L517.3 418.4 L517.3 420.8 L521.5 420.8 L521.5 420.2 L525.7 420.2 L525.7 420.2 L529.9 420.2 L529.9 420.8 L534.1 420.8 L534.1 419.0 L538.4 419.0 L538.4 422.1 L542.6 422.1 L542.6 421.8 L546.8 421.8 L546.8 416.6 L551.0 416.6 L551.0 420.8 L555.2 420.8 L555.2 422.1 L559.4 422.1 L559.4 420.8 L563.6 420.8 L563.6 420.8 L567.9 420.8 L567.9 420.2 L572.1 420.2 L572.1 416.0 L576.3 416.0 L576.3 420.2 L580.5 420.2 L580.5 422.3 L584.7 422.3 L584.7 422.1 L588.9 422.1 L588.9 422.1 L593.2 422.1 L593.2 419.0 L597.4 419.0 L597.4 421.8 L601.6 421.8 L601.6 422.3 L605.8 422.3 L605.8 422.7 L610.0 422.7 L610.0 421.2 L614.2 421.2 L614.2 422.1 L618.4 422.1 L618.4 422.4 L622.7 422.4 L622.7 419.4 L626.9 419.4 L626.9 418.4 L631.1 418.4 L631.1 422.1 L635.3 422.1 L635.3 420.8 L639.5 420.8 L639.5 422.3 L643.7 422.3 L643.7 423.0 L647.9 423.0 L647.9 423.6 L652.2 423.6 L652.2 425.7 L656.4 425.7 L656.4 425.4 L660.6 425.4 L660.6 425.3 L664.8 425.3 L664.8 425.1 L669.0 425.1 L669.0 425.3 L673.2 425.3 L673.2 425.4 L677.5 425.4 L677.5 424.8 L681.7 424.8 L681.7 425.8 L685.9 425.8 L685.9 425.7 L690.1 425.7 L690.1 426.0 L694.3 426.0 L694.3 425.8 L698.5 425.8 L698.5 424.1 L702.7 424.1 L702.7 425.4 L707.0 425.4 L707.0 425.7 L711.2 425.7 L711.2 425.9 L715.4 425.9 L715.4 426.2 L719.6 426.2 L719.6 426.3 L723.8 426.3 L723.8 428.1 L728.0 428.1 L728.0 425.7 L732.2 425.7 L732.2 427.5 L736.5 427.5 L736.5 427.2 L740.7 427.2 L740.7 426.9 L744.9 426.9 L744.9 427.2 L749.1 427.2 L749.1 426.5 L753.3 426.5 L753.3 426.6 L757.5 426.6 L757.5 426.9 L761.8 426.9 L761.8 428.1 L766.0 428.1 L766.0 426.3 L770.2 426.3 L770.2 425.7 L774.4 425.7 L774.4 425.7 L778.6 425.7 L778.6 427.2 L782.8 427.2 L782.8 427.7 L787.0 427.7 L787.0 427.5 L791.3 427.5 L791.3 427.5 L795.5 427.5 L795.5 427.2 L799.7 427.2 L799.7 426.3 L803.9 426.3 L803.9 427.7 L808.1 427.7 L808.1 427.5 L812.3 427.5 L812.3 426.6 L816.5 426.6 L816.5 428.1 L820.8 428.1 L820.8 428.5 L825.0 428.5 L825.0 428.1 L829.2 428.1 L829.2 428.1 L833.4 428.1 L833.4 428.2 L837.6 428.2 L837.6 428.3 L841.8 428.3 L841.8 428.5 L846.1 428.5 L846.1 428.5 L850.3 428.5 L850.3 364.4 L854.5 364.4 L854.5 407.2 L858.7 407.2 L858.7 426.6 L862.9 426.6 L862.9 426.3 L867.1 426.3 L867.1 427.9 L871.3 427.9 L871.3 428.5 L875.6 428.5 L875.6 428.5 L879.8 428.5 L879.8 428.1 L884.0 428.1 L884.0 425.7 L888.2 425.7 L888.2 426.3 L892.4 426.3 L892.4 428.1 L896.6 428.1 L896.6 427.9 L900.9 427.9 L900.9 427.9 L905.1 427.9 L905.1 428.1 L909.3 428.1 L909.3 428.2 L913.5 428.2 L913.5 428.2 L917.7 428.2 L917.7 428.2 L921.9 428.2 L921.9 428.5 L926.1 428.5 L926.1 428.5 L930.4 428.5 L930.4 428.5 L934.6 428.5 L934.6 428.5 L938.8 428.5 L938.8 428.3 L943.0 428.3 L943.0 428.3 L947.2 428.3 L947.2 428.3 L951.4 428.3 L951.4 428.1 L955.6 428.1 L955.6 428.2 L959.9 428.2 L959.9 428.2 L964.1 428.2 L964.1 428.2 L968.3 428.2 L968.3 428.2 L972.5 428.2 L972.5 428.1 L976.7 428.1 L976.7 428.1 L980.9 428.1 L980.9 428.0 L985.1 428.0 L985.1 428.0 L989.4 428.0 L989.4 427.2 L993.6 427.2 L993.6 428.0 L997.8 428.0 L997.8 428.0 L1002.0 428.0 L1002.0 428.0 L1006.2 428.0 L1006.2 428.0 L1010.4 428.0 L1010.4 428.0 L1014.7 428.0 L1014.7 428.0 L1018.9 428.0 L1018.9 428.0 L1023.1 428.0 L1023.1 428.0 L1027.3 428.0 L1027.3 428.0 L1031.5 428.0 L1031.5 427.2 L1035.7 427.2 L1035.7 428.0 L1039.9 428.0 L1039.9 428.0 L1044.2 428.0 L1044.2 428.0 L1048.4 428.0 L1048.4 428.0 L1052.6 428.0 L1052.6 426.3 L1056.8 426.3 L1056.8 428.0 L1061.0 428.0 L1061.0 428.0 L1065.2 428.0 L1065.2 428.0 L1069.4 428.0 L1069.4 428.0 L1073.7 428.0 L1073.7 427.0 L1077.9 427.0 L1077.9 428.0 L1082.1 428.0 L1082.1 428.0 L1086.3 428.0 L1086.3 428.0 L1090.5 428.0 L1090.5 428.0 L1094.7 428.0 L1094.7 428.0 L1099.0 428.0 L1099.0 428.0 L1103.2 428.0 L1103.2 427.0 L1107.4 427.0 L1107.4 428.0 L1111.6 428.0 L1111.6 428.0 L1115.8 428.0 L1115.8 428.0 L1120.0 428.0 L1120.0 428.0 L1124.2 428.0 L1124.2 428.0 L1128.5 428.0 L1128.5 428.0 L1132.7 428.0 L1132.7 428.0 L1136.9 428.0 L1136.9 428.0 L1141.1 428.0 L1141.1 428.1 L1145.3 428.1 L1145.3 428.1 L1149.5 428.1 L1149.5 427.9 L1153.8 427.9 L1153.8 427.5 L1158.0 427.5 L1158.0 427.9 L1162.2 427.9 L1162.2 428.1 L1166.4 428.1 L1166.4 428.1 L1170.6 428.1 L1170.6 428.1 L1174.8 428.1 L1174.8 427.5 L1179.0 427.5 L1179.0 426.9 L1183.3 426.9 L1183.3 428.1 L1187.5 428.1 L1187.5 428.1 L1191.7 428.1 L1191.7 427.5 L1195.9 427.5 L1195.9 427.9 L1200.1 427.9 L1200.1 427.2 L1204.3 427.2 L1204.3 426.6 L1208.5 426.6 L1208.5 425.3 L1212.8 425.3 L1212.8 426.9 L1217.0 426.9 L1217.0 427.2 L1221.2 427.2 L1221.2 426.9 L1225.4 426.9 L1225.4 426.3 L1229.6 426.3 L1229.6 427.2 L1233.8 427.2 L1233.8 426.5 L1238.0 426.5 L1238.0 426.5 L1242.3 426.5 L1242.3 426.3 L1246.5 426.3 L1246.5 419.4 L1250.7 419.4 L1250.7 426.0 L1254.9 426.0 L1254.9 426.0 L1259.1 426.0 L1259.1 423.3 L1263.3 423.3 L1263.3 417.5 L1267.6 417.5 L1267.6 426.0 L1271.8 426.0 L1271.8 414.6 L1276.0 414.6 L1276.0 411.8 L1280.2 411.8 L1280.2 416.3 L1284.4 416.3 L1284.4 419.0 L1288.6 419.0 L1288.6 403.3 L1292.8 403.3 L1292.8 417.8 L1297.1 417.8 L1297.1 410.9 L1301.3 410.9 L1301.3 403.3 L1305.5 403.3 L1305.5 404.3 L1310.0 404.3 L1310.0 416.0 L1305.5 416.0 L1305.5 423.9 L1301.3 423.9 L1301.3 418.4 L1297.1 418.4 L1297.1 424.5 L1292.8 424.5 L1292.8 414.2 L1288.6 414.2 L1288.6 425.3 L1284.4 425.3 L1284.4 426.9 L1280.2 426.9 L1280.2 426.3 L1276.0 426.3 L1276.0 422.3 L1271.8 422.3 L1271.8 429.3 L1267.6 429.3 L1267.6 423.3 L1263.3 423.3 L1263.3 429.3 L1259.1 429.3 L1259.1 429.3 L1254.9 429.3 L1254.9 429.3 L1250.7 429.3 L1250.7 429.3 L1246.5 429.3 L1246.5 429.3 L1242.3 429.3 L1242.3 429.3 L1238.0 429.3 L1238.0 429.3 L1233.8 429.3 L1233.8 429.3 L1229.6 429.3 L1229.6 429.3 L1225.4 429.3 L1225.4 429.3 L1221.2 429.3 L1221.2 429.3 L1217.0 429.3 L1217.0 429.3 L1212.8 429.3 L1212.8 429.3 L1208.5 429.3 L1208.5 429.3 L1204.3 429.3 L1204.3 429.3 L1200.1 429.3 L1200.1 429.3 L1195.9 429.3 L1195.9 429.3 L1191.7 429.3 L1191.7 429.3 L1187.5 429.3 L1187.5 429.3 L1183.3 429.3 L1183.3 429.3 L1179.0 429.3 L1179.0 429.3 L1174.8 429.3 L1174.8 429.3 L1170.6 429.3 L1170.6 429.3 L1166.4 429.3 L1166.4 429.3 L1162.2 429.3 L1162.2 429.3 L1158.0 429.3 L1158.0 429.3 L1153.8 429.3 L1153.8 429.3 L1149.5 429.3 L1149.5 429.3 L1145.3 429.3 L1145.3 429.3 L1141.1 429.3 L1141.1 429.3 L1136.9 429.3 L1136.9 429.3 L1132.7 429.3 L1132.7 429.3 L1128.5 429.3 L1128.5 429.3 L1124.2 429.3 L1124.2 429.3 L1120.0 429.3 L1120.0 429.3 L1115.8 429.3 L1115.8 429.3 L1111.6 429.3 L1111.6 429.3 L1107.4 429.3 L1107.4 429.3 L1103.2 429.3 L1103.2 429.3 L1099.0 429.3 L1099.0 429.3 L1094.7 429.3 L1094.7 429.3 L1090.5 429.3 L1090.5 429.3 L1086.3 429.3 L1086.3 429.3 L1082.1 429.3 L1082.1 429.3 L1077.9 429.3 L1077.9 429.3 L1073.7 429.3 L1073.7 429.3 L1069.4 429.3 L1069.4 429.3 L1065.2 429.3 L1065.2 429.3 L1061.0 429.3 L1061.0 429.3 L1056.8 429.3 L1056.8 428.5 L1052.6 428.5 L1052.6 429.3 L1048.4 429.3 L1048.4 429.3 L1044.2 429.3 L1044.2 429.3 L1039.9 429.3 L1039.9 429.3 L1035.7 429.3 L1035.7 429.3 L1031.5 429.3 L1031.5 429.3 L1027.3 429.3 L1027.3 429.3 L1023.1 429.3 L1023.1 429.3 L1018.9 429.3 L1018.9 429.3 L1014.7 429.3 L1014.7 429.3 L1010.4 429.3 L1010.4 429.3 L1006.2 429.3 L1006.2 429.3 L1002.0 429.3 L1002.0 429.3 L997.8 429.3 L997.8 429.3 L993.6 429.3 L993.6 429.3 L989.4 429.3 L989.4 429.3 L985.1 429.3 L985.1 429.3 L980.9 429.3 L980.9 429.3 L976.7 429.3 L976.7 429.3 L972.5 429.3 L972.5 429.3 L968.3 429.3 L968.3 429.3 L964.1 429.3 L964.1 429.3 L959.9 429.3 L959.9 429.3 L955.6 429.3 L955.6 429.3 L951.4 429.3 L951.4 429.3 L947.2 429.3 L947.2 429.3 L943.0 429.3 L943.0 429.3 L938.8 429.3 L938.8 429.3 L934.6 429.3 L934.6 429.3 L930.4 429.3 L930.4 429.3 L926.1 429.3 L926.1 429.3 L921.9 429.3 L921.9 429.3 L917.7 429.3 L917.7 429.3 L913.5 429.3 L913.5 429.3 L909.3 429.3 L909.3 429.3 L905.1 429.3 L905.1 429.3 L900.9 429.3 L900.9 429.3 L896.6 429.3 L896.6 429.3 L892.4 429.3 L892.4 427.2 L888.2 427.2 L888.2 427.2 L884.0 427.2 L884.0 429.3 L879.8 429.3 L879.8 429.3 L875.6 429.3 L875.6 429.3 L871.3 429.3 L871.3 429.3 L867.1 429.3 L867.1 428.1 L862.9 428.1 L862.9 426.9 L858.7 426.9 L858.7 408.8 L854.5 408.8 L854.5 364.7 L850.3 364.7 L850.3 429.3 L846.1 429.3 L846.1 429.3 L841.8 429.3 L841.8 429.3 L837.6 429.3 L837.6 429.3 L833.4 429.3 L833.4 429.3 L829.2 429.3 L829.2 429.3 L825.0 429.3 L825.0 429.3 L820.8 429.3 L820.8 429.3 L816.5 429.3 L816.5 429.3 L812.3 429.3 L812.3 429.3 L808.1 429.3 L808.1 429.3 L803.9 429.3 L803.9 429.3 L799.7 429.3 L799.7 429.3 L795.5 429.3 L795.5 429.3 L791.3 429.3 L791.3 429.3 L787.0 429.3 L787.0 429.3 L782.8 429.3 L782.8 428.5 L778.6 428.5 L778.6 427.2 L774.4 427.2 L774.4 427.2 L770.2 427.2 L770.2 427.7 L766.0 427.7 L766.0 429.3 L761.8 429.3 L761.8 429.3 L757.5 429.3 L757.5 429.3 L753.3 429.3 L753.3 429.3 L749.1 429.3 L749.1 429.3 L744.9 429.3 L744.9 429.3 L740.7 429.3 L740.7 429.3 L736.5 429.3 L736.5 429.3 L732.2 429.3 L732.2 428.5 L728.0 428.5 L728.0 429.3 L723.8 429.3 L723.8 429.3 L719.6 429.3 L719.6 429.3 L715.4 429.3 L715.4 429.3 L711.2 429.3 L711.2 429.3 L707.0 429.3 L707.0 429.3 L702.7 429.3 L702.7 429.3 L698.5 429.3 L698.5 429.3 L694.3 429.3 L694.3 429.3 L690.1 429.3 L690.1 429.3 L685.9 429.3 L685.9 429.3 L681.7 429.3 L681.7 429.3 L677.5 429.3 L677.5 429.3 L673.2 429.3 L673.2 429.3 L669.0 429.3 L669.0 429.3 L664.8 429.3 L664.8 429.3 L660.6 429.3 L660.6 429.3 L656.4 429.3 L656.4 429.3 L652.2 429.3 L652.2 429.3 L647.9 429.3 L647.9 429.3 L643.7 429.3 L643.7 429.3 L639.5 429.3 L639.5 425.1 L635.3 425.1 L635.3 427.2 L631.1 427.2 L631.1 425.3 L626.9 425.3 L626.9 425.7 L622.7 425.7 L622.7 425.7 L618.4 425.7 L618.4 425.3 L614.2 425.3 L614.2 425.7 L610.0 425.7 L610.0 425.8 L605.8 425.8 L605.8 426.0 L601.6 426.0 L601.6 426.0 L597.4 426.0 L597.4 426.0 L593.2 426.0 L593.2 426.3 L588.9 426.3 L588.9 426.5 L584.7 426.5 L584.7 426.5 L580.5 426.5 L580.5 426.5 L576.3 426.5 L576.3 426.0 L572.1 426.0 L572.1 426.0 L567.9 426.0 L567.9 426.0 L563.6 426.0 L563.6 426.6 L559.4 426.6 L559.4 426.9 L555.2 426.9 L555.2 426.9 L551.0 426.9 L551.0 425.3 L546.8 425.3 L546.8 427.2 L542.6 427.2 L542.6 426.9 L538.4 426.9 L538.4 423.3 L534.1 423.3 L534.1 426.5 L529.9 426.5 L529.9 426.3 L525.7 426.3 L525.7 426.3 L521.5 426.3 L521.5 426.3 L517.3 426.3 L517.3 425.9 L513.1 425.9 L513.1 425.1 L508.9 425.1 L508.9 422.7 L504.6 422.7 L504.6 424.5 L500.4 424.5 L500.4 420.2 L496.2 420.2 L496.2 421.4 L492.0 421.4 L492.0 422.9 L487.8 422.9 L487.8 423.9 L483.6 423.9 L483.6 422.7 L479.3 422.7 L479.3 423.6 L475.1 423.6 L475.1 423.3 L470.9 423.3 L470.9 422.3 L466.7 422.3 L466.7 427.2 L462.5 427.2 L462.5 419.0 L458.3 419.0 L458.3 422.1 L454.1 422.1 L454.1 425.3 L449.8 425.3 L449.8 418.4 L445.6 418.4 L445.6 426.9 L441.4 426.9 L441.4 414.4 L437.2 414.4 L437.2 419.0 L433.0 419.0 L433.0 426.9 L428.8 426.9 L428.8 425.3 L424.6 425.3 L424.6 420.2 L420.3 420.2 L420.3 424.8 L416.1 424.8 L416.1 427.2 L411.9 427.2 L411.9 424.1 L407.7 424.1 L407.7 423.3 L403.5 423.3 L403.5 425.1 L399.3 425.1 L399.3 421.1 L395.1 421.1 L395.1 422.3 L390.8 422.3 L390.8 422.1 L386.6 422.1 L386.6 420.5 L382.4 420.5 L382.4 425.1 L378.2 425.1 L378.2 425.3 L374.0 425.3 L374.0 425.8 L369.8 425.8 L369.8 426.0 L365.5 426.0 L365.5 427.2 L361.3 427.2 L361.3 425.7 L357.1 425.7 L357.1 426.9 L352.9 426.9 L352.9 425.3 L348.7 425.3 L348.7 424.1 L344.5 424.1 L344.5 426.9 L340.3 426.9 L340.3 427.2 L336.0 427.2 L336.0 428.9 L331.8 428.9 L331.8 427.5 L327.6 427.5 L327.6 420.2 L323.4 420.2 L323.4 425.3 L319.2 425.3 L319.2 427.2 L315.0 427.2 L315.0 374.1 L310.8 374.1 L310.8 377.4 L306.5 377.4 L306.5 359.2 L302.3 359.2 L302.3 416.0 L298.1 416.0 L298.1 412.4 L293.9 412.4 L293.9 411.2 L289.7 411.2 L289.7 419.0 L285.5 419.0 L285.5 417.2 L281.2 417.2 L281.2 400.3 L277.0 400.3 L277.0 414.2 L272.8 414.2 L272.8 421.4 L268.6 421.4 L268.6 417.2 L264.4 417.2 L264.4 413.6 L260.2 413.6 L260.2 422.1 L256.0 422.1 L256.0 413.0 L251.7 413.0 L251.7 364.1 L247.5 364.1 L247.5 405.1 L243.3 405.1 L243.3 411.8 L239.1 411.8 L239.1 408.5 L234.9 408.5 L234.9 419.0 L230.7 419.0 L230.7 419.6 L226.4 419.6 L226.4 420.8 L222.2 420.8 L222.2 422.7 L218.0 422.7 L218.0 421.4 L213.8 421.4 L213.8 418.4 L209.6 418.4 L209.6 422.1 L205.4 422.1 L205.4 419.0 L201.2 419.0 L201.2 419.6 L196.9 419.6 L196.9 418.4 L192.7 418.4 L192.7 419.6 L188.5 419.6 L188.5 419.0 L184.3 419.0 L184.3 421.2 L180.1 421.2 L180.1 420.8 L175.9 420.8 L175.9 420.2 L171.7 420.2 L171.7 421.7 L167.4 421.7 L167.4 421.4 L163.2 421.4 L163.2 419.6 L159.0 419.6 L159.0 421.4 L154.8 421.4 L154.8 422.1 L150.6 422.1 L150.6 420.0 L146.4 420.0 L146.4 419.0 L142.2 419.0 L142.2 420.2 L137.9 420.2 L137.9 419.3 L133.7 419.3 L133.7 419.6 L129.5 419.6 L129.5 421.4 L125.3 421.4 L125.3 420.8 L121.1 420.8 L121.1 419.0 L116.9 419.0 L116.9 420.2 L112.6 420.2 L112.6 419.6 L108.4 419.6 L108.4 421.4 L104.2 421.4 L104.2 416.6 L100.0 416.6Z" fill="#ffff00"/>
<path d="M100.0 416.6 L104.2 416.6 L104.2 421.4 L108.4 421.4 L108.4 419.6 L112.6 419.6 L112.6 420.2 L116.9 420.2 L116.9 419.0 L121.1 419.0 L121.1 420.8 L125.3 420.8 L125.3 421.4 L129.5 421.4 L129.5 419.6 L133.7 419.6 L133.7 419.3 L137.9 419.3 L137.9 420.2 L142.2 420.2 L142.2 419.0 L146.4 419.0 L146.4 420.0 L150.6 420.0 L150.6 422.1 L154.8 422.1 L154.8 421.4 L159.0 421.4 L159.0 419.6 L163.2 419.6 L163.2 421.4 L167.4 421.4 L167.4 421.7 L171.7 421.7 L171.7 420.2 L175.9 420.2 L175.9 420.8 L180.1 420.8 L180.1 421.2 L184.3 421.2 L184.3 419.0 L188.5 419.0 L188.5 419.6 L192.7 419.6 L192.7 418.4 L196.9 418.4 L196.9 419.6 L201.2 419.6 L201.2 419.0 L205.4 419.0 L205.4 422.1 L209.6 422.1 L209.6 418.4 L213.8 418.4 L213.8 421.4 L218.0 421.4 L218.0 422.7 L222.2 422.7 L222.2 420.8 L226.4 420.8 L226.4 419.6 L230.7 419.6 L230.7 419.0 L234.9 419.0 L234.9 408.5 L239.1 408.5 L239.1 411.8 L243.3 411.8 L243.3 405.1 L247.5 405.1 L247.5 364.1 L251.7 364.1 L251.7 413.0 L256.0 413.0 L256.0 422.1 L260.2 422.1 L260.2 413.6 L264.4 413.6 L264.4 417.2 L268.6 417.2 L268.6 421.4 L272.8 421.4 L272.8 414.2 L277.0 414.2 L277.0 400.3 L281.2 400.3 L281.2 417.2 L285.5 417.2 L285.5 419.0 L289.7 419.0 L289.7 411.2 L293.9 411.2 L293.9 412.4 L298.1 412.4 L298.1 416.0 L302.3 416.0 L302.3 359.2 L306.5 359.2 L306.5 377.4 L310.8 377.4 L310.8 374.1 L315.0 374.1 L315.0 427.2 L319.2 427.2 L319.2 425.3 L323.4 425.3 L323.4 420.2 L327.6 420.2 L327.6 427.5 L331.8 427.5 L331.8 428.9 L336.0 428.9 L336.0 427.2 L340.3 427.2 L340.3 426.9 L344.5 426.9 L344.5 424.1 L348.7 424.1 L348.7 425.3 L352.9 425.3 L352.9 426.9 L357.1 426.9 L357.1 425.7 L361.3 425.7 L361.3 427.2 L365.5 427.2 L365.5 426.0 L369.8 426.0 L369.8 425.8 L374.0 425.8 L374.0 425.3 L378.2 425.3 L378.2 425.1 L382.4 425.1 L382.4 420.5 L386.6 420.5 L386.6 422.1 L390.8 422.1 L390.8 422.3 L395.1 422.3 L395.1 421.1 L399.3 421.1 L399.3 425.1 L403.5 425.1 L403.5 423.3 L407.7 423.3 L407.7 424.1 L411.9 424.1 L411.9 427.2 L416.1 427.2 L416.1 424.8 L420.3 424.8 L420.3 420.2 L424.6 420.2 L424.6 425.3 L428.8 425.3 L428.8 426.9 L433.0 426.9 L433.0 419.0 L437.2 419.0 L437.2 414.4 L441.4 414.4 L441.4 426.9 L445.6 426.9 L445.6 418.4 L449.8 418.4 L449.8 425.3 L454.1 425.3 L454.1 422.1 L458.3 422.1 L458.3 419.0 L462.5 419.0 L462.5 427.2 L466.7 427.2 L466.7 422.3 L470.9 422.3 L470.9 423.3 L475.1 423.3 L475.1 423.6 L479.3 423.6 L479.3 422.7 L483.6 422.7 L483.6 423.9 L487.8 423.9 L487.8 422.9 L492.0 422.9 L492.0 421.4 L496.2 421.4 L496.2 420.2 L500.4 420.2 L500.4 424.5 L504.6 424.5 L504.6 422.7 L508.9 422.7 L508.9 425.1 L513.1 425.1 L513.1 425.9 L517.3 425.9 L517.3 426.3 L521.5 426.3 L521.5 426.3 L525.7 426.3 L525.7 426.3 L529.9 426.3 L529.9 426.5 L534.1 426.5 L534.1 423.3 L538.4 423.3 L538.4 426.9 L542.6 426.9 L542.6 427.2 L546.8 427.2 L546.8 425.3 L551.0 425.3 L551.0 426.9 L555.2 426.9 L555.2 426.9 L559.4 426.9 L559.4 426.6 L563.6 426.6 L563.6 426.0 L567.9 426.0 L567.9 426.0 L572.1 426.0 L572.1 426.0 L576.3 426.0 L576.3 426.5 L580.5 426.5 L580.5 426.5 L584.7 426.5 L584.7 426.5 L588.9 426.5 L588.9 426.3 L593.2 426.3 L593.2 426.0 L597.4 426.0 L597.4 426.0 L601.6 426.0 L601.6 426.0 L605.8 426.0 L605.8 425.8 L610.0 425.8 L610.0 425.7 L614.2 425.7 L614.2 425.3 L618.4 425.3 L618.4 425.7 L622.7 425.7 L622.7 425.7 L626.9 425.7 L626.9 425.3 L631.1 425.3 L631.1 427.2 L635.3 427.2 L635.3 425.1 L639.5 425.1 L639.5 429.3 L643.7 429.3 L643.7 429.3 L647.9 429.3 L647.9 429.3 L652.2 429.3 L652.2 429.3 L656.4 429.3 L656.4 429.3 L660.6 429.3 L660.6 429.3 L664.8 429.3 L664.8 429.3 L669.0 429.3 L669.0 429.3 L673.2 429.3 L673.2 429.3 L677.5 429.3 L677.5 429.3 L681.7 429.3 L681.7 429.3 L685.9 429.3 L685.9 429.3 L690.1 429.3 L690.1 429.3 L694.3 429.3 L694.3 429.3 L698.5 429.3 L698.5 429.3 L702.7 429.3 L702.7 429.3 L707.0 429.3 L707.0 429.3 L711.2 429.3 L711.2 429.3 L715.4 429.3 L715.4 429.3 L719.6 429.3 L719.6 429.3 L723.8 429.3 L723.8 429.3 L728.0 429.3 L728.0 428.5 L732.2 428.5 L732.2 429.3 L736.5 429.3 L736.5 429.3 L740.7 429.3 L740.7 429.3 L744.9 429.3 L744.9 429.3 L749.1 429.3 L749.1 429.3 L753.3 429.3 L753.3 429.3 L757.5 429.3 L757.5 429.3 L761.8 429.3 L761.8 429.3 L766.0 429.3 L766.0 427.7 L770.2 427.7 L770.2 427.2 L774.4 427.2 L774.4 427.2 L778.6 427.2 L778.6 428.5 L782.8 428.5 L782.8 429.3 L787.0 429.3 L787.0 429.3 L791.3 429.3 L791.3 429.3 L795.5 429.3 L795.5 429.3 L799.7 429.3 L799.7 429.3 L803.9 429.3 L803.9 429.3 L808.1 429.3 L808.1 429.3 L812.3 429.3 L812.3 429.3 L816.5 429.3 L816.5 429.3 L820.8 429.3 L820.8 429.3 L825.0 429.3 L825.0 429.3 L829.2 429.3 L829.2 429.3 L833.4 429.3 L833.4 429.3 L837.6 429.3 L837.6 429.3 L841.8 429.3 L841.8 429.3 L846.1 429.3 L846.1 429.3 L850.3 429.3 L850.3 364.7 L854.5 364.7 L854.5 408.8 L858.7 408.8 L858.7 426.9 L862.9 426.9 L862.9 428.1 L867.1 428.1 L867.1 429.3 L871.3 429.3 L871.3 429.3 L875.6 429.3 L875.6 429.3 L879.8 429.3 L879.8 429.3 L884.0 429.3 L884.0 427.2 L888.2 427.2 L888.2 427.2 L892.4 427.2 L892.4 429.3 L896.6 429.3 L896.6 429.3 L900.9 429.3 L900.9 429.3 L905.1 429.3 L905.1 429.3 L909.3 429.3 L909.3 429.3 L913.5 429.3 L913.5 429.3 L917.7 429.3 L917.7 429.3 L921.9 429.3 L921.9 429.3 L926.1 429.3 L926.1 429.3 L930.4 429.3 L930.4 429.3 L934.6 429.3 L934.6 429.3 L938.8 429.3 L938.8 429.3 L943.0 429.3 L943.0 429.3 L947.2 429.3 L947.2 429.3 L951.4 429.3 L951.4 429.3 L955.6 429.3 L955.6 429.3 L959.9 429.3 L959.9 429.3 L964.1 429.3 L964.1 429.3 L968.3 429.3 L968.3 429.3 L972.5 429.3 L972.5 429.3 L976.7 429.3 L976.7 429.3 L980.9 429.3 L980.9 429.3 L985.1 429.3 L985.1 429.3 L989.4 429.3 L989.4 429.3 L993.6 429.3 L993.6 429.3 L997.8 429.3 L997.8 429.3 L1002.0 429.3 L1002.0 429.3 L1006.2 429.3 L1006.2 429.3 L1010.4 429.3 L1010.4 429.3 L1014.7 429.3 L1014.7 429.3 L1018.9 429.3 L1018.9 429.3 L1023.1 429.3 L1023.1 429.3 L1027.3 429.3 L1027.3 429.3 L1031.5 429.3 L1031.5 429.3 L1035.7 429.3 L1035.7 429.3 L1039.9 429.3 L1039.9 429.3 L1044.2 429.3 L1044.2 429.3 L1048.4 429.3 L1048.4 429.3 L1052.6 429.3 L1052.6 428.5 L1056.8 428.5 L1056.8 429.3 L1061.0 429.3 L1061.0 429.3 L1065.2 429.3 L1065.2 429.3 L1069.4 429.3 L1069.4 429.3 L1073.7 429.3 L1073.7 429.3 L1077.9 429.3 L1077.9 429.3 L1082.1 429.3 L1082.1 429.3 L1086.3 429.3 L1086.3 429.3 L1090.5 429.3 L1090.5 429.3 L1094.7 429.3 L1094.7 429.3 L1099.0 429.3 L1099.0 429.3 L1103.2 429.3 L1103.2 429.3 L1107.4 429.3 L1107.4 429.3 L1111.6 429.3 L1111.6 429.3 L1115.8 429.3 L1115.8 429.3 L1120.0 429.3 L1120.0 429.3 L1124.2 429.3 L1124.2 429.3 L1128.5 429.3 L1128.5 429.3 L1132.7 429.3 L1132.7 429.3 L1136.9 429.3 L1136.9 429.3 L1141.1 429.3 L1141.1 429.3 L1145.3 429.3 L1145.3 429.3 L1149.5 429.3 L1149.5 429.3 L1153.8 429.3 L1153.8 429.3 L1158.0 429.3 L1158.0 429.3 L1162.2 429.3 L1162.2 429.3 L1166.4 429.3 L1166.4 429.3 L1170.6 429.3 L1170.6 429.3 L1174.8 429.3 L1174.8 429.3 L1179.0 429.3 L1179.0 429.3 L1183.3 429.3 L1183.3 429.3 L1187.5 429.3 L1187.5 429.3 L1191.7 429.3 L1191.7 429.3 L1195.9 429.3 L1195.9 429.3 L1200.1 429.3 L1200.1 429.3 L1204.3 429.3 L1204.3 429.3 L1208.5 429.3 L1208.5 429.3 L1212.8 429.3 L1212.8 429.3 L1217.0 429.3 L1217.0 429.3 L1221.2 429.3 L1221.2 429.3 L1225.4 429.3 L1225.4 429.3 L1229.6 429.3 L1229.6 429.3 L1233.8 429.3 L1233.8 429.3 L1238.0 429.3 L1238.0 429.3 L1242.3 429.3 L1242.3 429.3 L1246.5 429.3 L1246.5 429.3 L1250.7 429.3 L1250.7 429.3 L1254.9 429.3 L1254.9 429.3 L1259.1 429.3 L1259.1 429.3 L1263.3 429.3 L1263.3 423.3 L1267.6 423.3 L1267.6 429.3 L1271.8 429.3 L1271.8 422.3 L1276.0 422.3 L1276.0 426.3 L1280.2 426.3 L1280.2 426.9 L1284.4 426.9 L1284.4 425.3 L1288.6 425.3 L1288.6 414.2 L1292.8 414.2 L1292.8 424.5 L1297.1 424.5 L1297.1 418.4 L1301.3 418.4 L1301.3 423.9 L1305.5 423.9 L1305.5 416.0 L1310.0 416.0 L1310.0 429.3 L100.0 429.3Z" fill="#ff0000"/>
</g>
<rect x="816.5" y="220" width="85" height="209.5" fill="#000" fill-opacity="0.32"/>
<path d="M816.5 220V429.5M901.5 220V429.5" fill="none" stroke="#161616" stroke-opacity="0.8" stroke-width="1.2"/>
<rect x="99" y="219" width="1212" height="211" fill="none" stroke="#454545" stroke-width="2"/>
<rect x="105" y="350" width="124" height="74" fill="#fff" fill-opacity="0.7"/>
<rect x="108.5" y="353.4" width="17" height="13" fill="#fff" fill-opacity="0.5" stroke="#ccc" stroke-width="1"/>
<rect x="110" y="354.9" width="14" height="10" fill="#ff0000"/>
<text x="178" y="363.5" text-anchor="middle" class="lt">High priority</text>
<rect x="108.5" y="371.5" width="17" height="13" fill="#fff" fill-opacity="0.5" stroke="#ccc" stroke-width="1"/>
<rect x="110" y="373.0" width="14" height="10" fill="#ffa500"/>
<text x="178" y="381.8" text-anchor="middle" class="lt">Medium priority</text>
<rect x="108.5" y="389.6" width="17" height="13" fill="#fff" fill-opacity="0.5" stroke="#ccc" stroke-width="1"/>
<rect x="110" y="391.1" width="14" height="10" fill="#ffff00"/>
<text x="178" y="400.1" text-anchor="middle" class="lt">Low priority</text>
<rect x="108.5" y="407.7" width="17" height="13" fill="#fff" fill-opacity="0.5" stroke="#ccc" stroke-width="1"/>
<rect x="110" y="409.2" width="14" height="10" fill="#00cd00"/>
<text x="178" y="418.4" text-anchor="middle" class="lt">Legitimate traffic</text>
<text x="93" y="255.8" text-anchor="end" class="tk">40</text>
<text x="93" y="299.8" text-anchor="end" class="tk">30</text>
<text x="93" y="344.8" text-anchor="end" class="tk">20</text>
<text x="93" y="388.8" text-anchor="end" class="tk">10</text>
<text x="93" y="433.8" text-anchor="end" class="tk">0</text>
<text transform="translate(54.9,336.3) rotate(-90)" text-anchor="middle" class="yl">Flows/s</text>
<text x="99" y="447" text-anchor="start" class="tk">Apr 8 2013</text>
<text x="298.5" y="447" text-anchor="middle" class="tk">13:00</text>
<text x="399.5" y="447" text-anchor="middle" class="tk">15:00</text>
<text x="500.5" y="447" text-anchor="middle" class="tk">17:00</text>
<text x="601.5" y="447" text-anchor="middle" class="tk">19:00</text>
<text x="702.5" y="447" text-anchor="middle" class="tk">21:00</text>
<text x="804.5" y="447" text-anchor="middle" class="tk">23:00</text>
<text x="905.5" y="447" text-anchor="middle" class="tk">1:00</text>
<text x="1006.5" y="447" text-anchor="middle" class="tk">3:00</text>
<text x="1107.5" y="447" text-anchor="middle" class="tk">5:00</text>
<text x="1208.5" y="447" text-anchor="middle" class="tk">7:00</text>
<text x="1294.5" y="447" text-anchor="middle" class="tk">Apr 9</text>
</svg>

<div id="b1" class="abs sb">Flows</div>
<div class="abs sb sb2" style="top:229px"><div class="mini"><b></b><u></u><em></em><s></s></div><i class="sbt">Bytes</i></div>
<div class="abs sb sb2" style="top:289px"><div class="mini"><b></b><u style="height:3px;top:2px"></u><em></em><s></s></div><i class="sbt">Packets</i></div>

<h2 class="abs" style="left:32px;top:511px">Traffic statistics <span>(2013-04-08 23:15 - 2013-04-09 00:55)</span></h2>

<div id="tb" class="abs">
  <div id="tbh" class="abs">
    <div class="abs th" style="left:0;width:35px;border-left:0"><svg width="11" height="9" viewBox="0 0 11 9" style="position:relative;top:0"><path d="M1.3 4.6L4 7.4L9.8 1.3" stroke="#111" stroke-width="1.8" fill="none"/></svg></div>
    <div class="abs th" style="left:35px;width:252px">Priority</div>
    <div class="abs th" style="left:287px;width:161px">Flows</div>
    <div class="abs th" style="left:448px;width:192px">Average flows</div>
    <div class="abs th" style="left:640px;width:133px">Bytes</div>
    <div class="abs th" style="left:773px;width:196px">Average bytes</div>
    <div class="abs th" style="left:969px;width:198px">Packets</div>
    <div class="abs th" style="left:1167px;width:222px">Average packets</div>
  </div>
  <div class="abs row" style="top:26px;background:#f6f6f6"><div class="abs cb"><svg width="11" height="11" viewBox="0 0 11 11"><path d="M2.2 5.9L4.9 9.1L9.0 1.7" stroke="#3d509b" stroke-width="1.8" fill="none"/></svg></div><div class="abs sw" style="background:#ff0000"></div><div class="abs nm">High priority</div><div class="abs td" style="left:287px;width:161px">6.4 k flows</div><div class="abs td" style="left:448px;width:192px">1.062 flows/s</div><div class="abs td" style="left:640px;width:133px">11.4 GiB</div><div class="abs td" style="left:773px;width:196px">1.9 MiB/s</div><div class="abs td" style="left:969px;width:198px">12.6 M packets</div><div class="abs td" style="left:1167px;width:222px;padding-right:6px">2.1 k packets/s</div></div>
  <div class="abs row" style="top:49px;background:#ebebeb"><div class="abs cb"><svg width="11" height="11" viewBox="0 0 11 11"><path d="M2.2 5.9L4.9 9.1L9.0 1.7" stroke="#3d509b" stroke-width="1.8" fill="none"/></svg></div><div class="abs sw" style="background:#ffa500"></div><div class="abs nm">Medium priority</div><div class="abs td" style="left:287px;width:161px">91.0 flows</div><div class="abs td" style="left:448px;width:192px">0.015 flows/s</div><div class="abs td" style="left:640px;width:133px">12.5 KiB</div><div class="abs td" style="left:773px;width:196px">2.1 B/s</div><div class="abs td" style="left:969px;width:198px">181.0 packets</div><div class="abs td" style="left:1167px;width:222px;padding-right:6px">0.0 packets/s</div></div>
  <div class="abs row" style="top:72px;background:#f6f6f6"><div class="abs cb"><svg width="11" height="11" viewBox="0 0 11 11"><path d="M2.2 5.9L4.9 9.1L9.0 1.7" stroke="#3d509b" stroke-width="1.8" fill="none"/></svg></div><div class="abs sw" style="background:#ffff00"></div><div class="abs nm">Low priority</div><div class="abs td" style="left:287px;width:161px">1.5 k flows</div><div class="abs td" style="left:448px;width:192px">0.244 flows/s</div><div class="abs td" style="left:640px;width:133px">130.7 KiB</div><div class="abs td" style="left:773px;width:196px">22.3 B/s</div><div class="abs td" style="left:969px;width:198px">1.6 k packets</div><div class="abs td" style="left:1167px;width:222px;padding-right:6px">0.3 packets/s</div></div>
  <div class="abs row" style="top:95px;background:#ebebeb"><div class="abs cb"><svg width="11" height="11" viewBox="0 0 11 11"><path d="M2.2 5.9L4.9 9.1L9.0 1.7" stroke="#3d509b" stroke-width="1.8" fill="none"/></svg></div><div class="abs sw" style="background:#00cd00"></div><div class="abs nm">Legitimate traffic</div><div class="abs td" style="left:287px;width:161px">15.3 k flows</div><div class="abs td" style="left:448px;width:192px">2.550 flows/s</div><div class="abs td" style="left:640px;width:133px">23.9 GiB</div><div class="abs td" style="left:773px;width:196px">4.1 MiB/s</div><div class="abs td" style="left:969px;width:198px">32.3 M packets</div><div class="abs td" style="left:1167px;width:222px;padding-right:6px">5.4 k packets/s</div></div>
  <div id="tot" class="abs row"><div class="abs nm">Total traffic</div><div class="abs td" style="left:287px;width:161px">23.2 k flows</div><div class="abs td" style="left:448px;width:192px">3.871 flows/s</div><div class="abs td" style="left:640px;width:133px">35.3 GiB</div><div class="abs td" style="left:773px;width:196px">6.0 MiB/s</div><div class="abs td" style="left:969px;width:198px">44.9 M packets</div><div class="abs td" style="left:1167px;width:222px;padding-right:6px">7.5 k packets/s</div></div>
  <div class="abs vl" style="left:34px"></div>
  <div class="abs vl" style="left:286px"></div>
  <div class="abs vl" style="left:447px"></div>
  <div class="abs vl" style="left:639px"></div>
  <div class="abs vl" style="left:772px"></div>
  <div class="abs vl" style="left:968px"></div>
  <div class="abs vl" style="left:1166px"></div>
</div>

<h2 class="abs" style="left:32px;top:693px">Top 10 event types by priority <span>(2013-04-08 23:15 - 2013-04-09 00:55)</span></h2>
<div class="abs" style="left:49px;top:719px;width:0;height:170px;border-left:1px dotted #9a9a9a"></div>
<div class="abs pm" style="left:45px;top:723px"></div><div class="abs" style="left:55px;top:727px;width:3px;border-top:1px dotted #9a9a9a"></div>
<div class="abs tr" style="left:68px;top:724px">VERY HIGH</div><div class="abs tr" style="left:318px;top:724px">SSHDICT</div><div class="abs tr" style="left:568px;top:724px">5</div>
<div class="abs pm" style="left:45px;top:749px"></div><div class="abs" style="left:55px;top:753px;width:3px;border-top:1px dotted #9a9a9a"></div>
<div class="abs tr" style="left:68px;top:750px">HIGH</div><div class="abs tr" style="left:318px;top:750px">HIGHTRANSF</div><div class="abs tr" style="left:568px;top:750px">21</div>
<div class="abs pm" style="left:45px;top:775px"></div><div class="abs" style="left:55px;top:779px;width:3px;border-top:1px dotted #9a9a9a"></div>
<div class="abs tr" style="left:68px;top:776px">HIGH</div><div class="abs tr" style="left:318px;top:776px">TOPPORTS</div><div class="abs tr" style="left:568px;top:776px">2</div>
<div class="abs pm" style="left:45px;top:801px"></div><div class="abs" style="left:55px;top:805px;width:3px;border-top:1px dotted #9a9a9a"></div>
<div class="abs tr" style="left:68px;top:802px">MEDIUM</div><div class="abs tr" style="left:318px;top:802px">L3ANOMALY</div><div class="abs tr" style="left:568px;top:802px">43</div>
<div class="abs pm" style="left:45px;top:827px"></div><div class="abs" style="left:55px;top:831px;width:3px;border-top:1px dotted #9a9a9a"></div>
<div class="abs tr" style="left:68px;top:828px">MEDIUM</div><div class="abs tr" style="left:318px;top:828px">DNSANOMALY</div><div class="abs tr" style="left:568px;top:828px">7</div>
<div class="abs pm" style="left:45px;top:853px"></div><div class="abs" style="left:55px;top:857px;width:3px;border-top:1px dotted #9a9a9a"></div>
<div class="abs tr" style="left:68px;top:854px">MEDIUM</div><div class="abs tr" style="left:318px;top:854px">DNSQUERY</div><div class="abs tr" style="left:568px;top:854px">2</div>
<div class="abs pm" style="left:45px;top:879px"></div><div class="abs" style="left:55px;top:883px;width:3px;border-top:1px dotted #9a9a9a"></div>
</body></html>
